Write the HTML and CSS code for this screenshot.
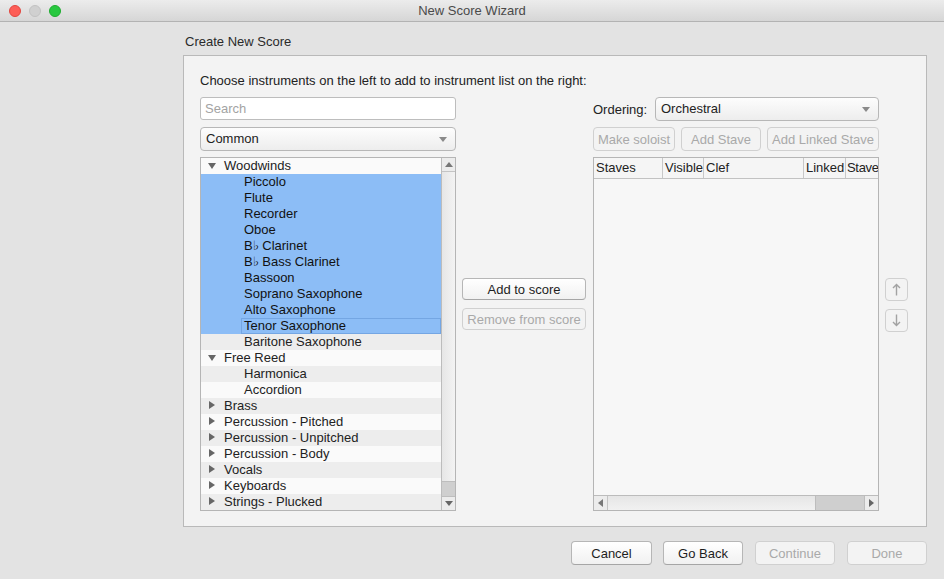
FILE: index.html
```html
<!DOCTYPE html>
<html lang="en">
<head>
    <meta charset="UTF-8">
    <meta name="viewport" content="width=device-width, initial-scale=1.0">
    <title>New Score Wizard</title>
    <link rel="stylesheet" href="styles.css">
</head>
<body>
    <div class="window">
        <div class="titlebar">
            <div class="lights">
                <span class="light red"></span>
                <span class="light gray"></span>
                <span class="light green"></span>
            </div>
            <div class="title">New Score Wizard</div>
        </div>

        <div class="content">
            <h1>Create New Score</h1>
            <div class="panel">
                <p class="intro">Choose instruments on the left to add to instrument list on the right:</p>
                <div class="cols">
                    <!-- left: available instruments -->
                    <div class="col-left">
                        <input class="search" type="text" placeholder="Search">
                        <div class="combo">Common<span class="caret"></span></div>
                        <div class="tree">
                            <div class="rows">
                                <div class="row group"><span class="tri down"></span>Woodwinds</div>
                                <div class="row child sel">Piccolo</div>
                                <div class="row child sel">Flute</div>
                                <div class="row child sel">Recorder</div>
                                <div class="row child sel">Oboe</div>
                                <div class="row child sel">B♭ Clarinet</div>
                                <div class="row child sel">B♭ Bass Clarinet</div>
                                <div class="row child sel">Bassoon</div>
                                <div class="row child sel">Soprano Saxophone</div>
                                <div class="row child sel">Alto Saxophone</div>
                                <div class="row child sel focus">Tenor Saxophone</div>
                                <div class="row child">Baritone Saxophone</div>
                                <div class="row group"><span class="tri down"></span>Free Reed</div>
                                <div class="row child">Harmonica</div>
                                <div class="row child">Accordion</div>
                                <div class="row group"><span class="tri right"></span>Brass</div>
                                <div class="row group"><span class="tri right"></span>Percussion - Pitched</div>
                                <div class="row group"><span class="tri right"></span>Percussion - Unpitched</div>
                                <div class="row group"><span class="tri right"></span>Percussion - Body</div>
                                <div class="row group"><span class="tri right"></span>Vocals</div>
                                <div class="row group"><span class="tri right"></span>Keyboards</div>
                                <div class="row group"><span class="tri right"></span>Strings - Plucked</div>
                            </div>
                            <div class="vscroll">
                                <div class="sbtn"><span class="tri up small"></span></div>
                                <div class="vtrack"></div>
                                <div class="vthumb"></div>
                                <div class="sbtn bottom"><span class="tri down small"></span></div>
                            </div>
                        </div>
                    </div>

                    <!-- middle: add / remove -->
                    <div class="col-mid">
                        <button class="btn">Add to score</button>
                        <button class="btn" disabled>Remove from score</button>
                    </div>

                    <!-- right: score instruments -->
                    <div class="col-right">
                        <div class="ordering">
                            <label>Ordering:</label>
                            <div class="combo wide">Orchestral<span class="caret"></span></div>
                        </div>
                        <div class="toolrow">
                            <button class="btn" disabled>Make soloist</button>
                            <button class="btn" disabled>Add Stave</button>
                            <button class="btn" disabled>Add Linked Stave</button>
                        </div>
                        <div class="table">
                            <div class="thead">
                                <div class="th c1">Staves</div>
                                <div class="th c2">Visible</div>
                                <div class="th c3">Clef</div>
                                <div class="th c4">Linked</div>
                                <div class="th c5">Stave</div>
                            </div>
                            <div class="tbody"></div>
                            <div class="hscroll">
                                <div class="sbtn"><span class="tri left small"></span></div>
                                <div class="htrack"></div>
                                <div class="hthumb"></div>
                                <div class="sbtn end"><span class="tri right small"></span></div>
                            </div>
                        </div>
                    </div>

                    <!-- up / down -->
                    <div class="col-arrows">
                        <button class="btn arrow" disabled>
                            <svg width="21" height="21" viewBox="0 0 21 21"><path d="M10.5 5.5V16.5M7 9L10.5 5.5L14 9" fill="none" stroke="#a2a2a2" stroke-width="1.4"/></svg>
                        </button>
                        <button class="btn arrow" disabled>
                            <svg width="21" height="21" viewBox="0 0 21 21"><path d="M10.5 4.5V15.5M7 12L10.5 15.5L14 12" fill="none" stroke="#a2a2a2" stroke-width="1.4"/></svg>
                        </button>
                    </div>
                </div>
            </div>

            <div class="footer">
                <button class="btn big">Cancel</button>
                <button class="btn big">Go Back</button>
                <button class="btn big" disabled>Continue</button>
                <button class="btn big" disabled>Done</button>
            </div>
        </div>
    </div>
</body>
</html>
```

FILE: styles.css
```css
*{
    margin: 0;
    padding: 0;
    box-sizing: border-box;
}
body{
    width: 944px;
    height: 579px;
    overflow: hidden;
    background: #e3e3e3;
    font-family: "Liberation Sans", Arial, sans-serif;
    font-size: 13px;
    color: #222;
}
.window{
    height: 579px;
}

/* title bar */
.titlebar{
    height: 22px;
    display: flex;
    align-items: center;
    position: relative;
    background: linear-gradient(#ececec, #d6d6d6);
    border-bottom: 1px solid #b3b3b3;
}
.lights{
    display: flex;
    gap: 8px;
    padding-left: 9px;
}
.light{
    width: 12px;
    height: 12px;
    border-radius: 50%;
}
.red{ background: #fd5e57; border: 1px solid #e2463f; }
.gray{ background: #d0d0d0; border: 1px solid #c2c2c2; }
.green{ background: #28c840; border: 1px solid #1eac2f; }
.title{
    position: absolute;
    left: 0;
    right: 0;
    text-align: center;
    color: #4a4a4a;
    font-size: 13px;
}

.content{
    padding-left: 183px;
    padding-right: 17px;
}
h1{
    font-size: 13px;
    font-weight: normal;
    color: #2a2a2a;
    height: 33px;
    line-height: 16px;
    padding-top: 12px;
    padding-left: 2px;
}
.panel{
    height: 472px;
    background: #f3f3f3;
    border: 1px solid #b9b9b9;
    padding: 17px 0 0 16px;
}
.intro{
    line-height: 16px;
    margin-bottom: 8px;
}
.cols{
    display: flex;
}

/* controls */
.btn{
    font-family: inherit;
    font-size: 13px;
    color: #1e1e1e;
    height: 22px;
    padding: 0 4px;
    background: linear-gradient(#ffffff, #f1f1f1);
    border: 1px solid #b6b6b6;
    border-bottom-color: #a6a6a6;
    border-radius: 4px;
}
.btn:disabled{
    color: #a9a9a9;
    background: #f3f3f3;
    border-color: #d0d0d0;
}
.search{
    display: block;
    width: 256px;
    height: 23px;
    border: 1px solid #bdbdbd;
    border-radius: 3px;
    background: #fff;
    font-family: inherit;
    font-size: 13px;
    padding: 0 4px;
    outline: none;
}
.search::placeholder{
    color: #a3a3a3;
}
.combo{
    position: relative;
    width: 256px;
    height: 24px;
    margin-top: 7px;
    line-height: 22px;
    padding-left: 5px;
    border: 1px solid #b7b7b7;
    border-radius: 4px;
    background: linear-gradient(#fdfdfd, #ededed);
}
.caret{
    position: absolute;
    right: 8px;
    top: 9px;
    border-left: 4px solid transparent;
    border-right: 4px solid transparent;
    border-top: 5px solid #8a8a8a;
}

/* tree */
.col-left{
    width: 256px;
}
.tree{
    margin-top: 6px;
    height: 354px;
    border: 1px solid #b5b5b5;
    display: flex;
    background: #fafafa;
}
.rows{
    flex: 1;
}
.row{
    height: 16px;
    line-height: 16px;
    white-space: nowrap;
    color: #222;
    position: relative;
}
.row:nth-child(even){
    background: #ededed;
}
.row.sel{
    background: #8cbdf6;
    color: #111;
}
.row.focus::after{
    content: "";
    position: absolute;
    left: 40px;
    right: 0;
    top: 0;
    bottom: 0;
    border: 1px solid #74a6e3;
}
.group{
    padding-left: 8px;
}
.child{
    padding-left: 43px;
}
.tri{
    display: inline-block;
    width: 0;
    height: 0;
    margin-right: 8px;
    vertical-align: 1px;
}
.tri.down{
    border-left: 4px solid transparent;
    border-right: 4px solid transparent;
    border-top: 6px solid #666;
    margin-left: -1px;
    margin-right: 8px;
}
.tri.right{
    border-top: 4px solid transparent;
    border-bottom: 4px solid transparent;
    border-left: 6px solid #666;
    margin-right: 9px;
}
.tri.up{
    border-left: 4px solid transparent;
    border-right: 4px solid transparent;
    border-bottom: 5px solid #777;
}
.tri.left{
    border-top: 4px solid transparent;
    border-bottom: 4px solid transparent;
    border-right: 5px solid #777;
}
.tri.small{
    margin: 0;
}
.tri.down.small{
    border-top-width: 5px;
}
.tri.right.small{
    border-left-width: 5px;
}

/* scrollbars */
.vscroll{
    width: 14px;
    border-left: 1px solid #bcbcbc;
    display: flex;
    flex-direction: column;
    background: linear-gradient(90deg, #e6e6e6, #f3f3f3);
}
.sbtn{
    width: 13px;
    height: 14px;
    display: flex;
    align-items: center;
    justify-content: center;
    border-bottom: 1px solid #c4c4c4;
    background: #ececec;
}
.sbtn.bottom{
    border-bottom: none;
    border-top: 1px solid #bdbdbd;
}
.vtrack{
    flex: 1;
}
.vthumb{
    height: 15px;
    background: #cfcfcf;
    border-top: 1px solid #bdbdbd;
}

.col-mid{
    width: 124px;
    margin-left: 6px;
    padding-top: 181px;
    display: flex;
    flex-direction: column;
    gap: 8px;
}
.col-mid .btn{
    width: 124px;
}

.col-right{
    width: 286px;
    margin-left: 7px;
}
.ordering{
    display: flex;
    align-items: center;
    justify-content: space-between;
}
.ordering .combo{
    margin-top: 0;
    width: 224px;
}
.toolrow{
    display: flex;
    gap: 6px;
    margin-top: 6px;
}
.toolrow .btn{
    height: 24px;
    padding: 0 3px;
}
.toolrow .btn:nth-child(1){
    width: 82px;
}
.toolrow .btn:nth-child(2){
    width: 80px;
}
.toolrow .btn:nth-child(3){
    width: 112px;
}

/* table */
.table{
    margin-top: 6px;
    height: 354px;
    border: 1px solid #b5b5b5;
    background: #f7f7f7;
    display: flex;
    flex-direction: column;
    overflow: hidden;
}
.thead{
    display: flex;
    height: 21px;
    border-bottom: 1px solid #c2c2c2;
    background: #f5f5f5;
    overflow: hidden;
}
.th{
    flex-shrink: 0;
    line-height: 20px;
    padding-left: 2px;
    border-right: 1px solid #c8c8c8;
    white-space: nowrap;
    overflow: hidden;
}
.c1{ width: 69px; }
.c2{ width: 41px; }
.c3{ width: 100px; }
.c4{ width: 42px; }
.c5{ width: 32px; padding-left: 1px; border-right: none; letter-spacing: -0.3px; }
.tbody{
    flex: 1;
}
.hscroll{
    height: 15px;
    display: flex;
    border-top: 1px solid #bcbcbc;
    background: linear-gradient(#e6e6e6, #f1f1f1);
}
.hscroll .sbtn{
    width: 14px;
    height: 14px;
    border-bottom: none;
    border-right: 1px solid #c4c4c4;
}
.hscroll .sbtn.end{
    border-right: none;
    border-left: 1px solid #bdbdbd;
}
.htrack{
    flex: 1;
}
.hthumb{
    width: 49px;
    background: #cfcfcf;
    border-left: 1px solid #bdbdbd;
}

.col-arrows{
    margin-left: 6px;
    padding-top: 181px;
    display: flex;
    flex-direction: column;
    gap: 8px;
}
.btn.arrow{
    width: 23px;
    height: 23px;
    padding: 0;
    display: flex;
    align-items: center;
    justify-content: center;
}

/* footer */
.footer{
    display: flex;
    justify-content: flex-end;
    gap: 12px;
    margin-top: 14px;
}
.btn.big{
    width: 80px;
    height: 24px;
}
.footer .btn:nth-child(1){
    width: 81px;
    margin-right: -1px;
}
```
